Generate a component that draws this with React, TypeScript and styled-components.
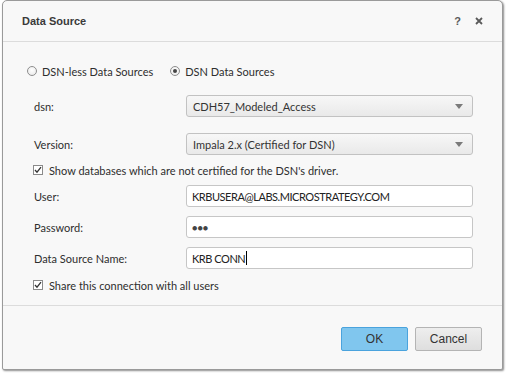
import styled, { createGlobalStyle } from 'styled-components';

const GlobalStyle = createGlobalStyle`
  html, body {
    margin: 0;
    padding: 0;
    background: #ffffff;
  }
  body {
    font-family: Lato, "Open Sans", "Liberation Sans", sans-serif;
  }
`;

const Page = styled.div`
  width: 507px;
  height: 373px;
  padding: 0 0 0 2px;
  box-sizing: border-box;
`;

const Dialog = styled.div`
  width: 501px;
  height: 370px;
  box-sizing: border-box;
  background: #f8f8f8;
  border: 1px solid #9a9a9a;
  border-radius: 5px 5px 2px 2px;
  box-shadow: 1px 1px 2px rgba(0, 0, 0, 0.45);
  display: flex;
  flex-direction: column;
`;

const Header = styled.div`
  height: 40px;
  display: flex;
  align-items: center;
  padding: 0 19px 0 19px;
  border-bottom: 1px solid #dcdcdc;
`;

const Title = styled.div`
  flex: 1;
  font-family: "Liberation Sans", Arial, sans-serif;
  font-size: 11px;
  font-weight: bold;
  color: #3a3a3a;
`;

const Help = styled.span`
  font-family: "Liberation Sans", Arial, sans-serif;
  font-weight: bold;
  font-size: 11px;
  color: #5a5a5a;
  margin-right: 14px;
`;

const Body = styled.div`
  height: 264px;
  box-sizing: border-box;
  padding: 18px 0 0 0;
  border-bottom: 1px solid #dcdcdc;
`;

const Row = styled.div`
  display: flex;
  align-items: center;
  height: ${p => p.h || '22px'};
  margin-top: ${p => p.top || '0px'};
  padding-left: ${p => p.left || '31px'};
  font-size: 11px;
  color: #2e2e2e;
`;

const Label = styled.div`
  width: 152px;
  flex-shrink: 0;
`;

const RadioOpt = styled.label`
  display: flex;
  align-items: center;
  margin-right: 17px;
`;

const Radio = styled.span`
  width: 10px;
  height: 10px;
  border-radius: 50%;
  border: 1px solid #8e8e8e;
  background: radial-gradient(circle at 50% 40%, #ffffff 0%, #e6e6e6 100%);
  box-sizing: border-box;
  margin-right: 5px;
  display: flex;
  align-items: center;
  justify-content: center;
  &::after {
    content: '';
    width: 4px;
    height: 4px;
    border-radius: 50%;
    background: ${p => (p.checked ? '#444' : 'transparent')};
  }
`;

const Check = styled.span`
  width: 10px;
  height: 10px;
  box-sizing: border-box;
  border: 1px solid #8a8a8a;
  background: #fff;
  margin-right: 6px;
  display: flex;
  align-items: center;
  justify-content: center;
`;

const Select = styled.div`
  width: 287px;
  height: 22px;
  box-sizing: border-box;
  border: 1px solid #c2c2c2;
  border-radius: 3px;
  background: linear-gradient(#f7f7f7, #e9e9e9);
  display: flex;
  align-items: center;
  padding: 0 9px 0 6px;
  color: #333;
  span {
    flex: 1;
  }
  &::after {
    content: '';
    border-left: 4px solid transparent;
    border-right: 4px solid transparent;
    border-top: 5px solid #7a7a7a;
  }
`;

const Input = styled.div`
  width: 287px;
  height: 22px;
  box-sizing: border-box;
  border: 1px solid #c6c6c6;
  border-radius: 3px;
  background: #fff;
  display: flex;
  align-items: center;
  padding: 0 5px;
  color: #222;
  letter-spacing: -0.45px;
  white-space: pre;
`;

const Dots = styled.span`
  font-size: 9px;
  letter-spacing: 0;
  color: #444;
`;

const Caret = styled.span`
  display: inline-block;
  width: 1px;
  height: 14px;
  background: #000;
  margin-left: 1px;
`;

const Footer = styled.div`
  flex: 1;
  display: flex;
  justify-content: flex-end;
  align-items: flex-start;
  padding: 20px 20px 0 0;
  gap: 7px;
`;

const Button = styled.button`
  width: 67px;
  height: 24px;
  margin-top: 1px;
  border-radius: 2px;
  font-family: "Liberation Sans", Arial, sans-serif;
  font-size: 12px;
  color: #333;
  border: 1px solid ${p => (p.primary ? '#4aa3dd' : '#b4b4b4')};
  background: ${p => (p.primary ? '#80c6ee' : 'linear-gradient(#eeeeee, #dedede)')};
  padding: 0;
`;

function CheckMark() {
  return (
    <svg width="8" height="8" viewBox="0 0 8 8">
      <path d="M1 4 L3 6.2 L7 1.2" fill="none" stroke="#333" strokeWidth="1.3" />
    </svg>
  );
}

function CloseIcon() {
  return (
    <svg width="8" height="8" viewBox="0 0 8 8">
      <path d="M1 1 L7 7 M7 1 L1 7" stroke="#5a5a5a" strokeWidth="1.8" />
    </svg>
  );
}

export default function App() {
  return (
    <Page>
      <GlobalStyle />
      <Dialog>
        <Header>
          <Title>Data Source</Title>
          <Help>?</Help>
          <CloseIcon />
        </Header>
        <Body>
          <Row left="24px">
            <RadioOpt>
              <Radio />
              DSN-less Data Sources
            </RadioOpt>
            <RadioOpt>
              <Radio checked />
              DSN Data Sources
            </RadioOpt>
          </Row>
          <Row top="13px">
            <Label>dsn:</Label>
            <Select><span>CDH57_Modeled_Access</span></Select>
          </Row>
          <Row top="16px">
            <Label>Version:</Label>
            <Select><span>Impala 2.x (Certified for DSN)</span></Select>
          </Row>
          <Row top="7px" h="16px" left="30px">
            <Check><CheckMark /></Check>
            Show databases which are not certified for the DSN's driver.
          </Row>
          <Row top="7px">
            <Label>User:</Label>
            <Input>KRBUSERA@LABS.MICROSTRATEGY.COM</Input>
          </Row>
          <Row top="9px">
            <Label>Password:</Label>
            <Input><Dots>●●●</Dots></Input>
          </Row>
          <Row top="9px">
            <Label>Data Source Name:</Label>
            <Input>KRB CONN<Caret /></Input>
          </Row>
          <Row top="8px" h="16px" left="30px">
            <Check><CheckMark /></Check>
            Share this connection with all users
          </Row>
        </Body>
        <Footer>
          <Button primary>OK</Button>
          <Button>Cancel</Button>
        </Footer>
      </Dialog>
    </Page>
  );
}
